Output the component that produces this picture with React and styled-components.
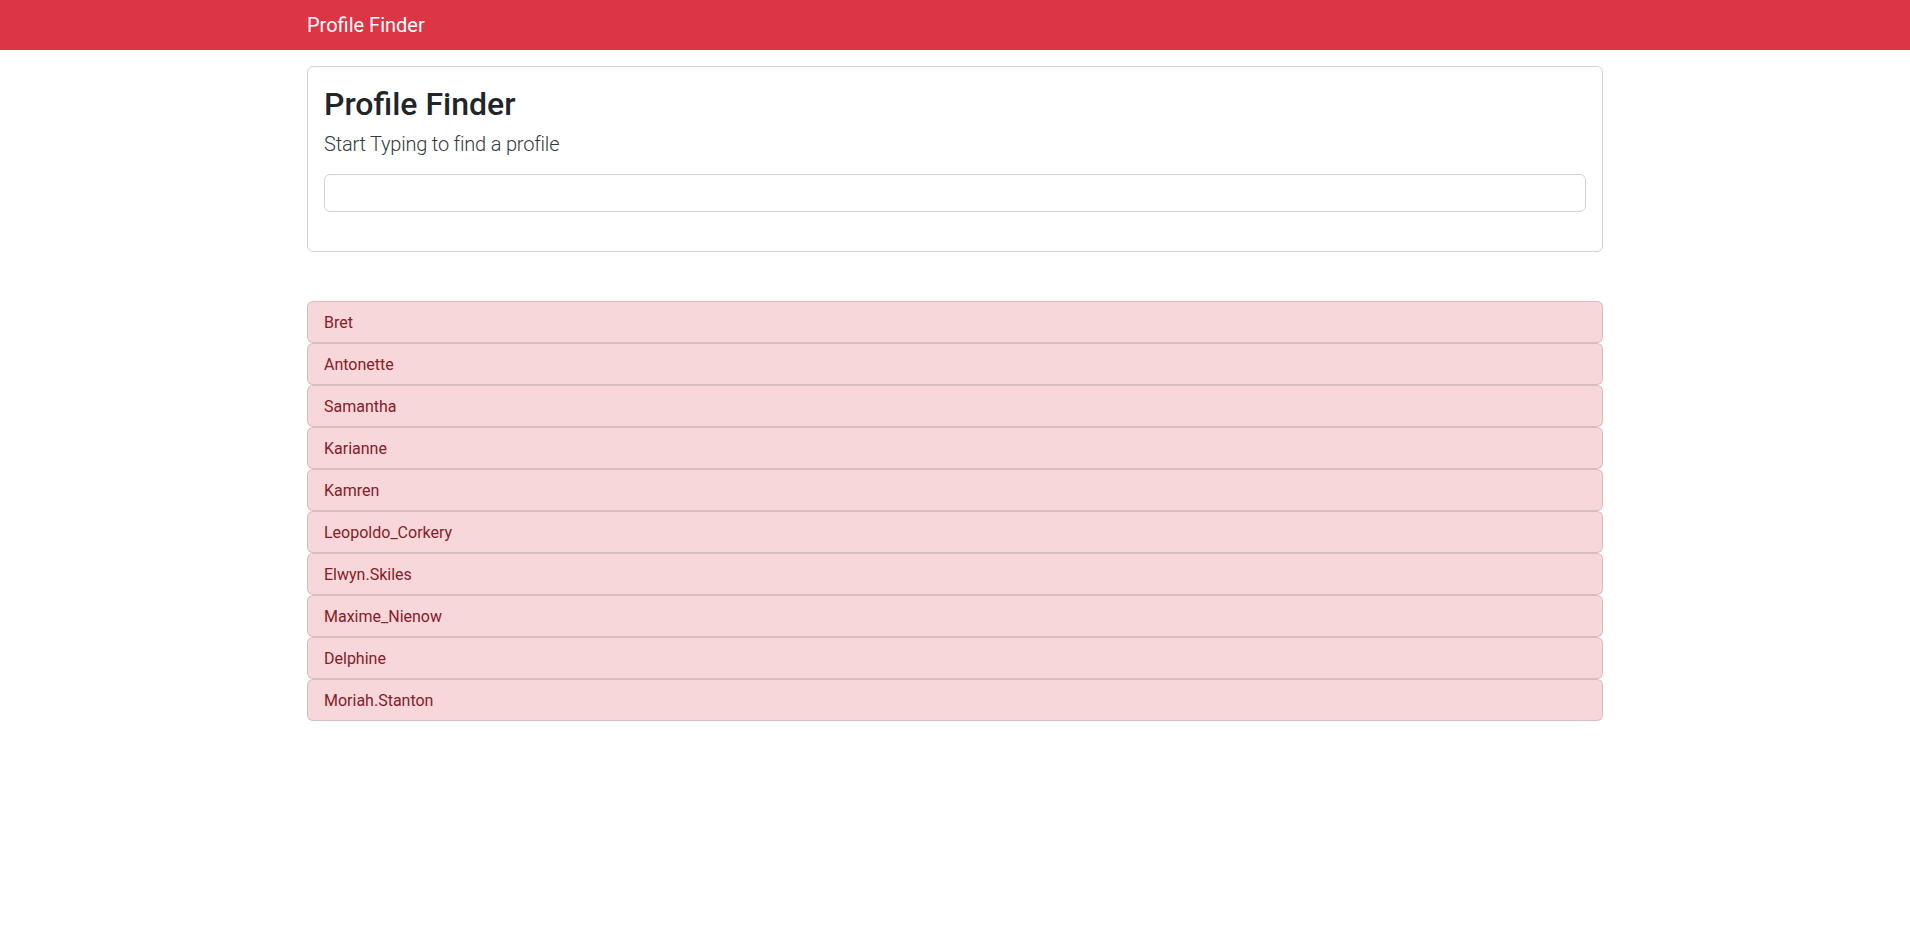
import React, { useState, useMemo } from 'react';
import styled, { createGlobalStyle } from 'styled-components';

const GlobalStyle = createGlobalStyle`
  * { box-sizing: border-box; }
  body {
    margin: 0;
    font-family: Roboto, "Noto Sans", "Liberation Sans", sans-serif;
    font-size: 16px;
    line-height: 1.5;
    color: #212529;
    background: #fff;
  }
`;

const profiles = [
  'Bret',
  'Antonette',
  'Samantha',
  'Karianne',
  'Kamren',
  'Leopoldo_Corkery',
  'Elwyn.Skiles',
  'Maxime_Nienow',
  'Delphine',
  'Moriah.Stanton',
];

const Navbar = styled.nav`
  background-color: #dc3545;
  height: 50px;
  display: flex;
  align-items: center;
`;

const Container = styled.div`
  width: 100%;
  max-width: 1320px;
  margin: 0 auto;
  padding: 0 12px;
`;

const Brand = styled.span`
  color: #fff;
  font-size: 20px;
  line-height: 30px;
  display: block;
  margin-top: -1px;
`;

const Card = styled.div`
  margin-top: 16px;
  border: 1px solid rgba(0, 0, 0, 0.175);
  border-radius: 6px;
  padding: 16px;
`;

const Title = styled.h2`
  margin: 2px 0 6px;
  font-size: 32px;
  font-weight: 500;
  line-height: 1.2;
`;

const Lead = styled.p`
  margin: 1px 0 15px;
  font-size: 20px;
  font-weight: 300;
  line-height: 30px;
  letter-spacing: -0.2px;
  color: #343a40;
`;

const SearchInput = styled.input`
  display: block;
  width: 100%;
  height: 38px;
  margin-bottom: 23px;
  padding: 6px 12px;
  font: inherit;
  color: #212529;
  border: 1px solid #ced4da;
  border-radius: 6px;
  outline: none;
  &:focus {
    border-color: #f1aeb5;
    box-shadow: 0 0 0 4px rgba(220, 53, 69, 0.25);
  }
`;

const List = styled.ul`
  list-style: none;
  margin: 49px 0 0;
  padding: 0;
`;

const Item = styled.li`
  padding: 9px 16px 7px;
  line-height: 24px;
  color: #842029;
  background-color: #f8d7da;
  border: 1px solid rgba(0, 0, 0, 0.125);
  border-radius: 6px;
`;

const App = () => {
  const [query, setQuery] = useState('');

  const filtered = useMemo(
    () => profiles.filter(name => name.toLowerCase().includes(query.toLowerCase())),
    [query]
  );

  return (
    <>
      <GlobalStyle />
      <Navbar>
        <Container>
          <Brand>Profile Finder</Brand>
        </Container>
      </Navbar>

      <Container>
        <Card>
          <Title>Profile Finder</Title>
          <Lead>Start Typing to find a profile</Lead>
          <SearchInput
            type="text"
            value={query}
            onChange={e => setQuery(e.target.value)}
            aria-label="Search profiles"
          />
        </Card>

        <List>
          {filtered.map(name => (
            <Item key={name}>{name}</Item>
          ))}
        </List>
      </Container>
    </>
  );
};

export default App;
